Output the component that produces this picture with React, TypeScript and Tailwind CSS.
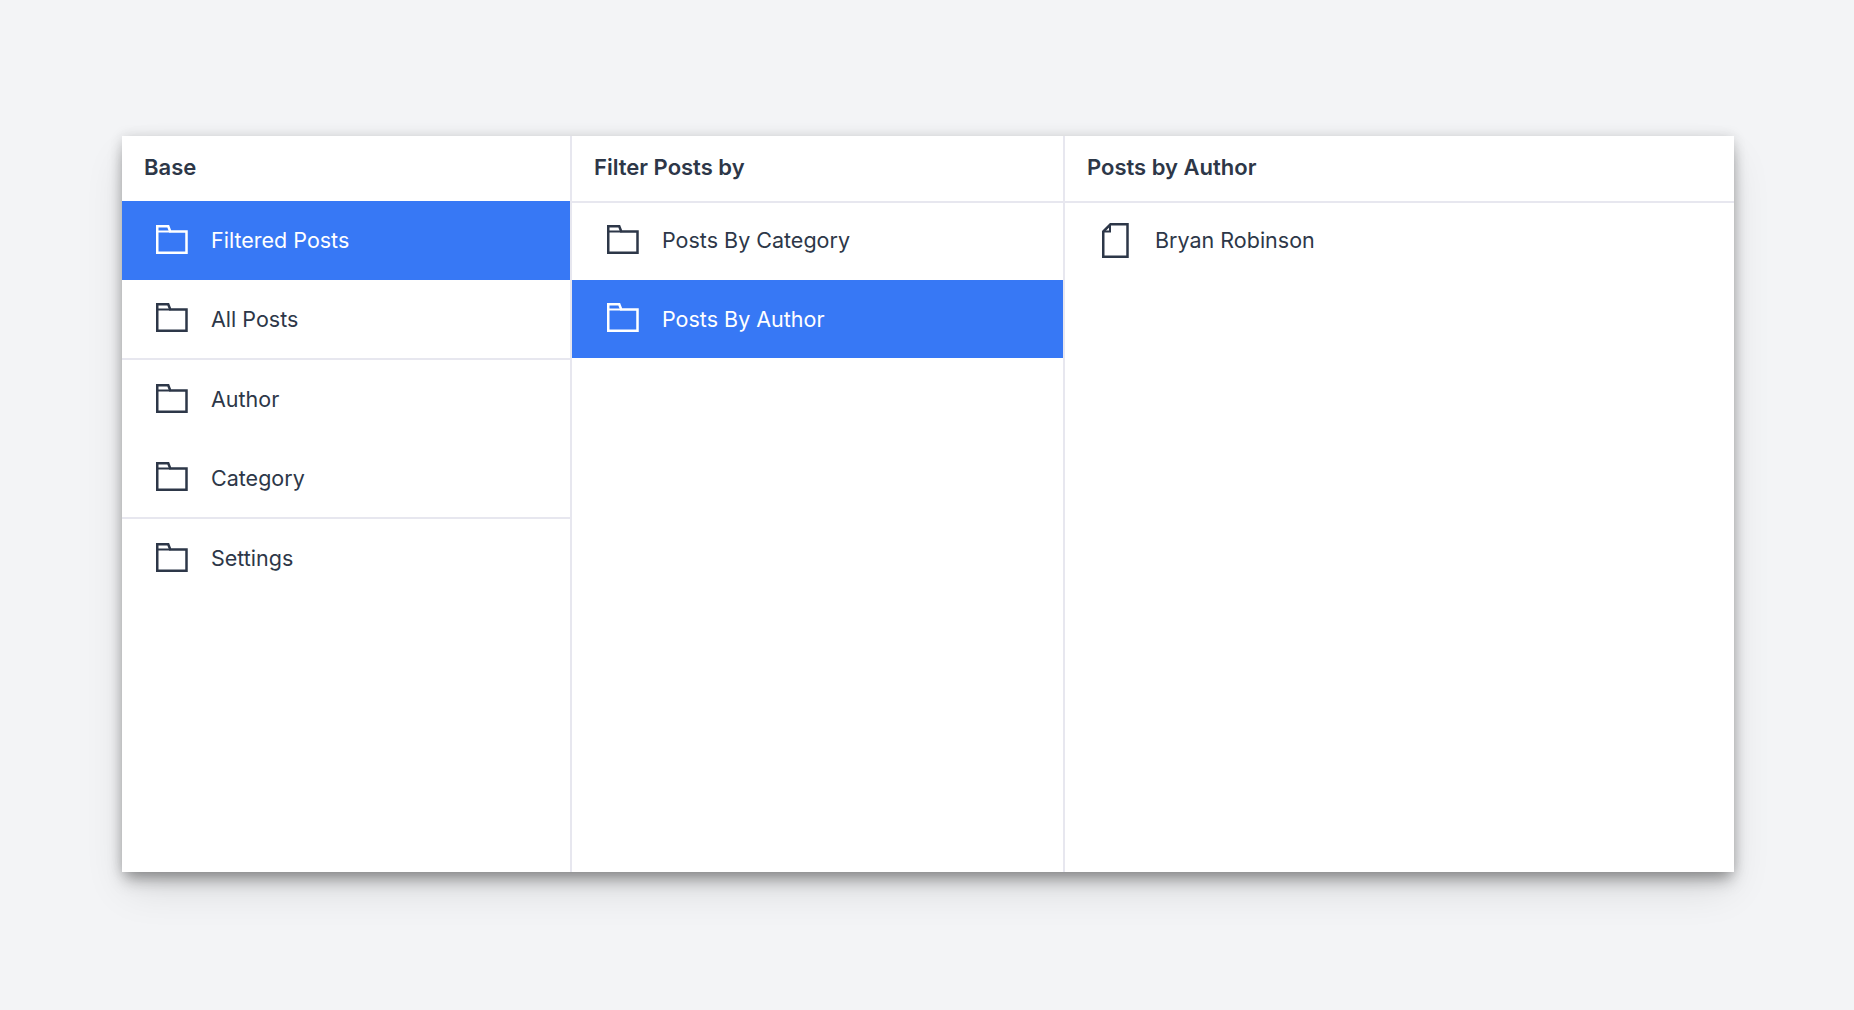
import { ReactNode } from 'react'

function FolderIcon({ active }: { active?: boolean }) {
  return (
    <svg width="32" height="29" viewBox="0 0 32 29" fill="none" className={`mb-[2px] ${active ? 'text-white' : 'text-[#2d3748]'}`}>
      <path d="M1.25 27.75V1.25h11l2 5.25h16.25v21.25z" stroke="currentColor" strokeWidth="2.5" />
      <path d="M1.25 6.5h13" stroke="currentColor" strokeWidth="2" />
    </svg>
  )
}

function PageIcon() {
  return (
    <svg width="27" height="35" viewBox="0 0 27 35" fill="none" className="text-[#2d3748]">
      <path d="M8.5 1.25h17v32.5H1.25V8.5z" stroke="currentColor" strokeWidth="2.5" />
      <path d="M8 2v6.5H2" stroke="currentColor" strokeWidth="2" />
    </svg>
  )
}

function Row({ label, icon, active, first, base }: { label: string; icon?: ReactNode; active?: boolean; first?: boolean; base?: boolean }) {
  return (
    <div
      className={`flex h-[78.5px] items-center text-[21.5px] ${base ? 'pl-[33px]' : 'pl-[34px]'} ${active ? 'bg-[#3778f5] text-white' : 'text-[#2d3748]'} ${first && !active ? 'border-t-2 border-[#e7e7ef] pb-[2px]' : ''}`}
    >
      <div className="flex w-[33px] justify-center">{icon ?? <FolderIcon active={active} />}</div>
      <span className="ml-[23px]">{label}</span>
    </div>
  )
}

function Column({ title, className, children }: { title: string; className: string; children: ReactNode }) {
  return (
    <div className={`flex flex-col ${className}`}>
      <div className="flex h-[65px] items-center px-[22px] pb-[3px] text-[22px] font-semibold text-[#2d3748]">
        {title}
      </div>
      {children}
    </div>
  )
}

export default function App() {
  return (
    <div className="flex h-[1010px] items-start justify-center bg-[#f3f4f6] pt-[136px] font-['Inter',sans-serif]">
      <div className="ml-[2px] flex h-[736px] w-[1612px] bg-white shadow-[0_10px_15px_-3px_rgba(0,0,0,0.35),0_20px_40px_-5px_rgba(0,0,0,0.12),0_0_12px_rgba(0,0,0,0.12)]">
        <Column title="Base" className="w-[450px] border-r-2 border-[#e7e7ef]">
          <div className="border-b-2 border-[#e7e7ef]">
            <Row label="Filtered Posts" active first base />
            <Row label="All Posts" base />
          </div>
          <div className="border-b-2 border-[#e7e7ef]">
            <Row label="Author" base />
            <Row label="Category" base />
          </div>
          <Row label="Settings" base />
        </Column>
        <Column title="Filter Posts by" className="w-[493px] border-r-2 border-[#e7e7ef]">
          <Row label="Posts By Category" first />
          <Row label="Posts By Author" active />
        </Column>
        <Column title="Posts by Author" className="flex-1">
          <Row label="Bryan Robinson" icon={<PageIcon />} first />
        </Column>
      </div>
    </div>
  )
}
